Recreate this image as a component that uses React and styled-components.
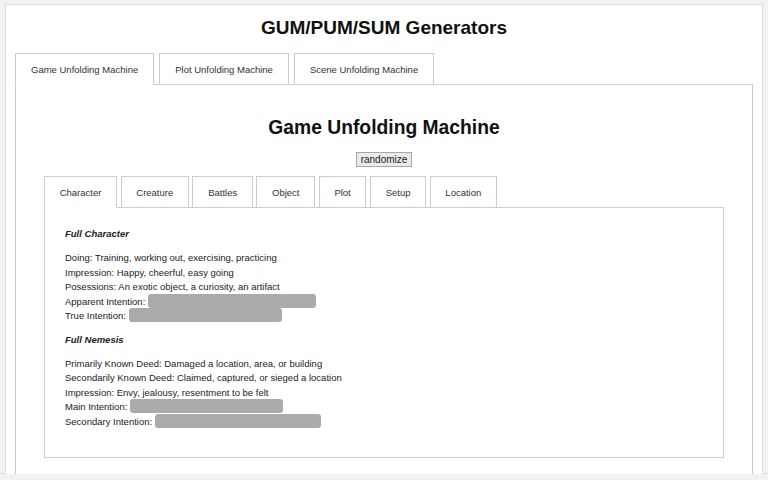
import React, { useState } from 'react';
import styled, { createGlobalStyle } from 'styled-components';

const GlobalStyle = createGlobalStyle`
  html, body {
    margin: 0;
    padding: 0;
    background: #f2f2f2;
    font-family: "Liberation Sans", Arial, sans-serif;
    color: #222;
  }
`;

const Page = styled.div`
  height: 474px;
  border-bottom: 1px solid #dedede;
  box-sizing: border-box;
  padding: 4px 5px 0 5px;
`;

const Sheet = styled.div`
  height: 470px;
  box-sizing: border-box;
  background: #fff;
  border: 1px solid #ddd;
  border-bottom: none;
  padding: 0 9px;
  overflow: hidden;
`;

const Title = styled.h1`
  margin: 12px 0 14px;
  font-size: 19px;
  line-height: 22px;
  font-weight: bold;
  text-align: center;
  color: #111;
`;

const TabList = styled.div`
  display: flex;
  gap: ${(p) => p.gap}px;
  margin-bottom: -1px;
  position: relative;
  z-index: 1;
`;

const Tab = styled.button`
  height: 32px;
  box-sizing: border-box;
  padding: 0 ${(p) => p.pad}px;
  border: 1px solid #ccc;
  border-bottom-color: ${(p) => (p.active ? '#fff' : '#ccc')};
  background: #fff;
  font-family: "Liberation Sans", Arial, sans-serif;
  font-size: 9.5px;
  color: #333;
  cursor: pointer;
`;

const Panel = styled.div`
  border: 1px solid #ccc;
  padding: ${(p) => p.padding};
`;

const Heading = styled.h2`
  margin: 0;
  font-size: 19.3px;
  line-height: 22px;
  text-align: center;
  color: #111;
`;

const ButtonRow = styled.div`
  display: flex;
  justify-content: center;
  margin: 13px 0 9px;
`;

const Randomize = styled.button`
  height: 15px;
  padding: 0 4px;
  border: 1px solid #a8a8a8;
  background: #ebebeb;
  font-family: "Liberation Sans", Arial, sans-serif;
  font-size: 10px;
  line-height: 13px;
  color: #222;
`;

const Section = styled.div`
  margin-bottom: 9px;
  &:last-child {
    margin-bottom: 0;
  }
`;

const SectionTitle = styled.div`
  font-size: 9.5px;
  line-height: 14.5px;
  font-weight: bold;
  font-style: italic;
  margin-bottom: 9.5px;
`;

const Line = styled.div`
  font-size: 9.5px;
  line-height: 14.5px;
  height: 14.5px;
  white-space: nowrap;
`;

const Hidden = styled.span`
  display: inline-block;
  width: ${(p) => p.w}px;
  height: 14px;
  background: #aaa;
  border-radius: 3px;
  vertical-align: middle;
  margin-top: -2px;
`;

const outerTabs = ['Game Unfolding Machine', 'Plot Unfolding Machine', 'Scene Unfolding Machine'];
const innerTabs = ['Character', 'Creature', 'Battles', 'Object', 'Plot', 'Setup', 'Location'];

const sections = [
  {
    title: 'Full Character',
    lines: [
      ['Doing: Training, working out, exercising, practicing'],
      ['Impression: Happy, cheerful, easy going'],
      ['Posessions: An exotic object, a curiosity, an artifact'],
      ['Apparent Intention:', 168],
      ['True Intention:', 153],
    ],
  },
  {
    title: 'Full Nemesis',
    lines: [
      ['Primarily Known Deed: Damaged a location, area, or building'],
      ['Secondarily Known Deed: Claimed, captured, or sieged a location'],
      ['Impression: Envy, jealousy, resentment to be felt'],
      ['Main Intention:', 153],
      ['Secondary Intention:', 166],
    ],
  },
];

export default function App() {
  const [outer, setOuter] = useState(0);
  const [inner, setInner] = useState(0);
  return (
    <Page>
      <GlobalStyle />
      <Sheet>
        <Title>GUM/PUM/SUM Generators</Title>
        <TabList gap={5}>
          {outerTabs.map((t, i) => (
            <Tab key={t} pad={15} active={i === outer} onClick={() => setOuter(i)}>
              {t}
            </Tab>
          ))}
        </TabList>
        <Panel padding="32px 28px 40px">
          <Heading>Game Unfolding Machine</Heading>
          <ButtonRow>
            <Randomize>randomize</Randomize>
          </ButtonRow>
          <TabList gap={3.5}>
            {innerTabs.map((t, i) => (
              <Tab key={t} pad={14.7} active={i === inner} onClick={() => setInner(i)}>
                {t}
              </Tab>
            ))}
          </TabList>
          <Panel padding="19px 20px 28px">
            {sections.map((s) => (
              <Section key={s.title}>
                <SectionTitle>{s.title}</SectionTitle>
                {s.lines.map(([text, w]) => (
                  <Line key={text}>
                    {text}
                    {w ? ' ' : null}
                    {w ? <Hidden w={w} /> : null}
                  </Line>
                ))}
              </Section>
            ))}
          </Panel>
        </Panel>
      </Sheet>
    </Page>
  );
}
